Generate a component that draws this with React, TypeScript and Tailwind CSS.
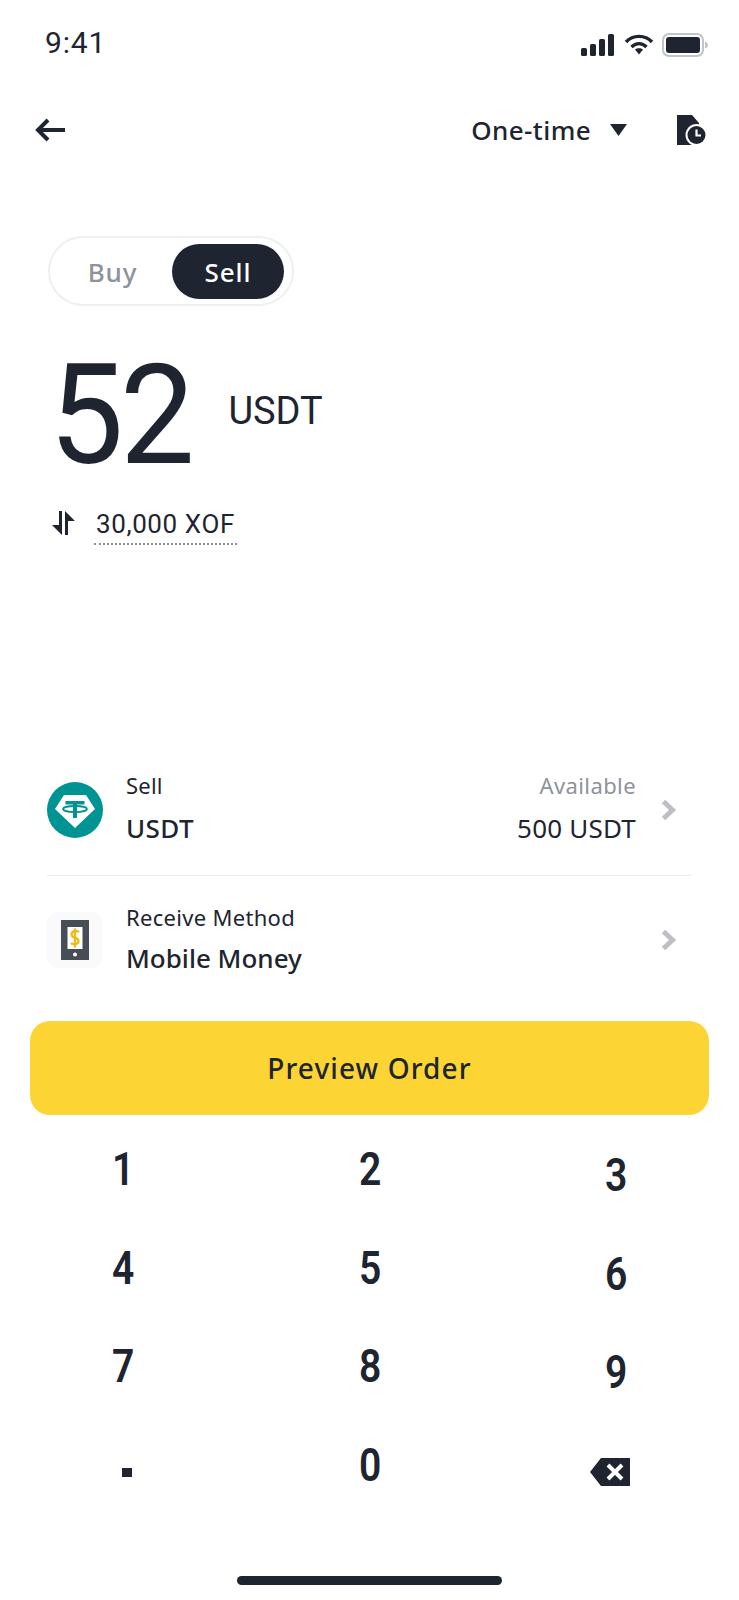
import React from 'react'

const INK = 'text-[#1e2530]'

const StatusIcons = () => (
  <div className="flex items-center gap-[8px]">
    <svg width="34" height="22" viewBox="0 0 34 22" fill="#1e2530" className="mr-[1px]">
      <rect x="0" y="14" width="6" height="8" rx="1.5" />
      <rect x="9" y="10" width="6" height="12" rx="1.5" />
      <rect x="18" y="5" width="6" height="17" rx="1.5" />
      <rect x="27" y="0" width="6" height="22" rx="1.5" />
    </svg>
    <svg width="30" height="22" viewBox="0 0 30 22" fill="none" stroke="#1e2530" strokeWidth="3.4">
      <path d="M2 8 C9 0.5 21 0.5 28 8" />
      <path d="M7.5 13 C12 8.5 18 8.5 22.5 13" />
      <path d="M11 15.5 L15 20.5 L19 15.5 C17 13.8 13 13.8 11 15.5 Z" fill="#1e2530" stroke="none" />
    </svg>
    <svg width="46" height="24" viewBox="0 0 46 24" fill="none">
      <rect x="1" y="1" width="40" height="22" rx="6" stroke="#c2c4c8" strokeWidth="2" />
      <rect x="4" y="4" width="34" height="16" rx="3" fill="#1e2530" />
      <path d="M43 8.5 C45 9 46 10.5 46 12 C46 13.5 45 15 43 15.5 Z" fill="#c2c4c8" />
    </svg>
  </div>
)

const HistoryIcon = () => (
  <svg width="29" height="30" viewBox="0 0 29 30">
    <path d="M0 0 H15 L22 8 V30 H0 Z" fill="#1e2530" />
    <circle cx="19.5" cy="20" r="11" fill="#fff" />
    <circle cx="19.5" cy="20" r="9" fill="#1e2530" />
    <path d="M19.5 14.5 V20.5 H24" fill="none" stroke="#fff" strokeWidth="2.2" />
  </svg>
)

const TetherLogo = () => (
  <svg width="56" height="56" viewBox="0 0 56 56">
    <circle cx="28" cy="28" r="28" fill="#009393" />
    <path d="M17 13 H39 L48 27 L28 46 L8 27 Z" fill="#fff" strokeLinejoin="round" />
    <path d="M18.5 19 H37.5 V22.5 H30 V36 H26 V22.5 H18.5 Z" fill="#009393" />
    <ellipse cx="28" cy="27" rx="12" ry="3" fill="none" stroke="#009393" strokeWidth="1.8" />
  </svg>
)

const MobileMoneyLogo = () => (
  <div className="flex h-[56px] w-[56px] items-center justify-center rounded-[12px] bg-[#fafafa]">
    <svg width="28" height="40" viewBox="0 0 28 40">
      <rect width="28" height="40" fill="#474d57" />
      <rect x="6.5" y="7" width="15" height="22" fill="#fff" />
      <path d="M18 12 C16.5 10.5 10.5 10.5 10.5 14.5 C10.5 18.5 17.5 16.8 17.5 21 C17.5 24.8 11.5 24.8 10 23" fill="none" stroke="#f0b90b" strokeWidth="2.2" />
      <rect x="13" y="8.5" width="2" height="19" fill="#f0b90b" />
      <circle cx="14" cy="34.5" r="2" fill="#fff" />
    </svg>
  </div>
)

const Chevron = () => (
  <svg width="16" height="22" viewBox="0 0 16 22" fill="none" stroke="#bdbfc4" strokeWidth="5">
    <path d="M2.5 2.5 L11.5 11 L2.5 19.5" />
  </svg>
)

const keys = ['1', '2', '3', '4', '5', '6', '7', '8', '9']

const Key = ({ label, col }: { label: string; col: number }) => (
  <div className={`flex h-[98.5px] items-start justify-center ${col === 2 ? 'pt-[6px]' : ''}`}>
    <span className="inline-block h-[54px] origin-center scale-x-[0.85] text-[46px] font-semibold leading-[54px]">{label}</span>
  </div>
)

export default function App() {
  return (
    <div className={`flex h-[1600px] w-[739px] flex-col bg-white font-['Noto_Sans',sans-serif] ${INK}`}>
      {/* Status bar */}
      <div className="flex h-[87px] items-center justify-between pl-[45px] pr-[31px] font-['Roboto',sans-serif]">
        <span className="mb-[2px] text-[30px] font-normal leading-none tracking-[0.8px]">9:41</span>
        <div className="pt-[2px]">
          <StatusIcons />
        </div>
      </div>

      {/* Header */}
      <div className="flex h-[86px] items-center justify-between pl-[35px] pr-[33px]">
        <svg width="30" height="24" viewBox="0 0 30 24" fill="none" stroke="#1e2530" strokeWidth="4">
          <path d="M13 2 L3 12 L13 22" />
          <path d="M3 12 H30" />
        </svg>
        <div className="flex items-center">
          <span className="text-[26px] font-medium leading-none tracking-[0.4px]">One-time</span>
          <svg width="17" height="12" viewBox="0 0 17 12" fill="#1e2530" className="ml-[19px] mr-[50px]">
            <path d="M0 0 H17 L8.5 12 Z" />
          </svg>
          <HistoryIcon />
        </div>
      </div>

      {/* Buy / sell toggle */}
      <div className="mt-[63px] ml-[48px] flex h-[70px] w-[246px] items-center rounded-full border-2 border-[#eeeff1] pr-[8px] text-[26px] font-medium leading-[40px] tracking-[0.9px]">
        <span className="w-[122px] pl-[3px] pt-[2px] text-center text-[#8e929a]">Buy</span>
        <span className="flex h-[55px] w-[112px] items-center justify-center rounded-full bg-[#1e2530] pt-[2px] text-white">Sell</span>
      </div>

      {/* Amount */}
      <div className="mt-[29px] ml-[49px] flex h-[160px] items-center font-['Roboto',sans-serif]">
        <span className="origin-left scale-x-[0.95] text-[140px] font-normal leading-none tracking-[-4px]">52</span>
        <span className="mb-[8px] ml-[30px] text-[38px] leading-none">USDT</span>
      </div>
      <div className="mt-[13px] ml-[52px] flex items-start font-['Roboto',sans-serif]">
        <svg width="23" height="24" viewBox="0 0 23 24" fill="#1e2530" className="mt-[3px]">
          <path d="M7 0 H10 V24 L0 14 H7 Z" />
          <path d="M13 0 L23 10 H16 V24 H13 Z" />
        </svg>
        <span className="ml-[19px] border-b-2 border-dotted border-[#8e929a] pb-[2px] pr-[2px] pl-[2px] text-[26px] leading-[33px] tracking-[0.6px]">30,000 XOF</span>
      </div>

      {/* Asset rows */}
      <div className="mt-[225px] mx-[47px] flex items-center border-b border-[#eaecef] pb-[26px]">
        <TetherLogo />
        <div className="ml-[23px] flex-1 pb-[5px]">
          <div className="text-[22px] leading-[30px] tracking-[0.2px]">Sell</div>
          <div className="mt-[12px] text-[26px] font-medium leading-[32px] tracking-[0.4px]">USDT</div>
        </div>
        <div className="pb-[5px] text-right">
          <div className="text-[22px] leading-[30px] tracking-[0.4px] text-[#8e929a]">Available</div>
          <div className="mt-[12px] text-[26px] leading-[32px] tracking-[0.2px]">500 USDT</div>
        </div>
        <div className="ml-[25px] mr-[15px]">
          <Chevron />
        </div>
      </div>
      <div className="mt-[26px] mx-[47px] flex items-center">
        <MobileMoneyLogo />
        <div className="ml-[23px] flex-1 pb-[3px]">
          <div className="text-[22px] leading-[30px] tracking-[0.3px]">Receive Method</div>
          <div className="mt-[10px] text-[26px] font-medium leading-[32px]">Mobile Money</div>
        </div>
        <div className="mr-[15px]">
          <Chevron />
        </div>
      </div>

      {/* Preview button */}
      <button className="mx-[30px] mt-[44px] h-[94px] rounded-[20px] bg-[#fcd535] text-[28px] font-medium tracking-[1.1px]">Preview Order</button>

      {/* Number pad */}
      <div className="mt-[27px] grid grid-cols-[247px_247px_245px] font-['Roboto',sans-serif]">
        {keys.map((k, i) => (
          <Key key={k} label={k} col={i % 3} />
        ))}
        <div className="flex h-[98.5px] items-start justify-center pt-[30px] pl-[7px]">
          <div className="h-[9px] w-[10px] bg-[#1e2530]" />
        </div>
        <Key label="0" col={1} />
        <div className="flex h-[98.5px] items-start justify-center pt-[20px] pr-[14px]">
          <svg width="40" height="28" viewBox="0 0 40 28">
            <path d="M11 0 H40 V28 H11 L0 14 Z" fill="#1e2530" />
            <path d="M18 7 L32 21 M32 7 L18 21" stroke="#fff" strokeWidth="4" />
          </svg>
        </div>
      </div>

      {/* Home indicator */}
      <div className="mx-auto mt-[40px] h-[9px] w-[265px] rounded-full bg-[#1e2530]" />
    </div>
  )
}
